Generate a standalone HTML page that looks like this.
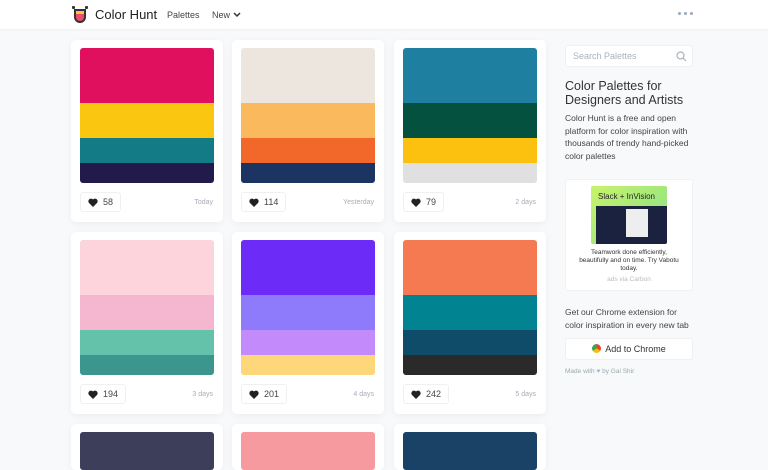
<!DOCTYPE html>
<html style="height:470px;overflow:hidden"><head><style>
*{margin:0;padding:0;box-sizing:border-box}
body{width:768px;height:470px;overflow:hidden;background:#f8f9fb;font-family:"Liberation Sans",sans-serif;color:#333;position:relative}
.hdr{position:absolute;left:0;top:0;width:768px;height:29px;background:#fff;box-shadow:0 1px 3px rgba(0,0,0,.04)}
.card{position:absolute;width:152px;height:182px;background:#fff;border-radius:5px;box-shadow:0 2px 8px rgba(0,0,0,.05)}
.pal{position:absolute;left:9px;top:8px;width:134px;height:135px;border-radius:3px;overflow:hidden}
.pal div{width:100%}
.like{position:absolute;left:9px;top:152px;height:20px;padding:0 7px;border:1px solid #eef0f3;border-radius:3px;font-size:9px;line-height:19px;color:#444}
.like svg{vertical-align:-2px;margin-right:5px}
.date{position:absolute;right:10px;top:159px;font-size:7px;color:#aab}
.side{position:absolute;left:565px}
</style></head><body>
<div class="hdr">
<svg style="position:absolute;left:72px;top:6px" width="16" height="17" viewBox="0 0 16 17"><rect x="0" y="0" width="3" height="3" rx="1" fill="#333"/><rect x="13" y="0" width="3" height="3" rx="1" fill="#333"/><path d="M2 3h12v8a6 6 0 0 1-12 0z" fill="#333"/><path d="M4 5h8v3H4z" fill="#f9c440"/><path d="M4 8h8v3a4 4 0 0 1-8 0z" fill="#ef4b6c"/></svg>
<div style="position:absolute;left:95px;top:7px;font-size:13px;color:#222">Color Hunt</div>
<div style="position:absolute;left:167px;top:10px;font-size:9px;color:#444">Palettes</div>
<div style="position:absolute;left:212px;top:10px;font-size:9px;color:#444">New <svg width="8" height="6" viewBox="0 0 8 6" style="vertical-align:0"><path d="M1 1l3 3 3-3" stroke="#333" stroke-width="1.5" fill="none"/></svg></div>
<div style="position:absolute;left:678px;top:12px;font-size:0">
<span style="display:inline-block;width:3px;height:3px;border-radius:50%;background:#9ab;margin-right:3px"></span><span style="display:inline-block;width:3px;height:3px;border-radius:50%;background:#9ab;margin-right:3px"></span><span style="display:inline-block;width:3px;height:3px;border-radius:50%;background:#9ab"></span></div>
</div>

<div class="card" style="left:71px;top:40px"><div class="pal"><div style="height:55px;background:#e1105f"></div><div style="height:35px;background:#fbc60f"></div><div style="height:25px;background:#137b85"></div><div style="height:20px;background:#231a4c"></div></div><div class="like"><svg width="10" height="9" viewBox="0 0 10 9"><path d="M5 9L1 5A2.4 2.4 0 0 1 5 1.5 2.4 2.4 0 0 1 9 5z" fill="#222"/></svg>58</div><div class="date">Today</div></div>
<div class="card" style="left:232px;top:40px"><div class="pal"><div style="height:55px;background:#ece6de"></div><div style="height:35px;background:#fbb95e"></div><div style="height:25px;background:#f2672a"></div><div style="height:20px;background:#1c3462"></div></div><div class="like"><svg width="10" height="9" viewBox="0 0 10 9"><path d="M5 9L1 5A2.4 2.4 0 0 1 5 1.5 2.4 2.4 0 0 1 9 5z" fill="#222"/></svg>114</div><div class="date">Yesterday</div></div>
<div class="card" style="left:394px;top:40px"><div class="pal"><div style="height:55px;background:#1f7fa0"></div><div style="height:35px;background:#03513e"></div><div style="height:25px;background:#fcc10e"></div><div style="height:20px;background:#e0e0e0"></div></div><div class="like"><svg width="10" height="9" viewBox="0 0 10 9"><path d="M5 9L1 5A2.4 2.4 0 0 1 5 1.5 2.4 2.4 0 0 1 9 5z" fill="#222"/></svg>79</div><div class="date">2 days</div></div>

<div class="card" style="left:71px;top:232px"><div class="pal"><div style="height:55px;background:#fdd3dc"></div><div style="height:35px;background:#f5b6cf"></div><div style="height:25px;background:#63c2a9"></div><div style="height:20px;background:#3d968e"></div></div><div class="like"><svg width="10" height="9" viewBox="0 0 10 9"><path d="M5 9L1 5A2.4 2.4 0 0 1 5 1.5 2.4 2.4 0 0 1 9 5z" fill="#222"/></svg>194</div><div class="date">3 days</div></div>
<div class="card" style="left:232px;top:232px"><div class="pal"><div style="height:55px;background:#6c2bf7"></div><div style="height:35px;background:#8e7bfc"></div><div style="height:25px;background:#c38afc"></div><div style="height:20px;background:#fed77a"></div></div><div class="like"><svg width="10" height="9" viewBox="0 0 10 9"><path d="M5 9L1 5A2.4 2.4 0 0 1 5 1.5 2.4 2.4 0 0 1 9 5z" fill="#222"/></svg>201</div><div class="date">4 days</div></div>
<div class="card" style="left:394px;top:232px"><div class="pal"><div style="height:55px;background:#f67a51"></div><div style="height:35px;background:#028391"></div><div style="height:25px;background:#0f4c6a"></div><div style="height:20px;background:#2b2a2a"></div></div><div class="like"><svg width="10" height="9" viewBox="0 0 10 9"><path d="M5 9L1 5A2.4 2.4 0 0 1 5 1.5 2.4 2.4 0 0 1 9 5z" fill="#222"/></svg>242</div><div class="date">5 days</div></div>

<div class="card" style="left:71px;top:424px;height:46px"><div class="pal" style="height:38px"><div style="height:38px;background:#3c3e5a"></div></div></div>
<div class="card" style="left:232px;top:424px;height:46px"><div class="pal" style="height:38px"><div style="height:38px;background:#f79aa0"></div></div></div>
<div class="card" style="left:394px;top:424px;height:46px"><div class="pal" style="height:38px"><div style="height:38px;background:#1a4267"></div></div></div>

<div class="side" style="top:45px;width:128px;height:22px;background:#fff;border:1px solid #eef0f3;border-radius:3px;font-size:9px;color:#a9b3bd;padding:5px 7px">Search Palettes
<svg style="position:absolute;right:5px;top:5px" width="11" height="11" viewBox="0 0 11 11"><circle cx="4.5" cy="4.5" r="3.5" stroke="#aab4be" stroke-width="1.2" fill="none"/><path d="M7 7l3 3" stroke="#aab4be" stroke-width="1.2"/></svg></div>
<div class="side" style="top:79px;font-size:12.5px;line-height:14px;color:#333">Color Palettes for<br>Designers and Artists</div>
<div class="side" style="top:112px;font-size:8.5px;line-height:12.6px;color:#444;width:135px">Color Hunt is a free and open platform for color inspiration with thousands of trendy hand-picked color palettes</div>
<div class="side" style="top:179px;width:128px;height:112px;background:#fff;border:1px solid #f0f1f3;border-radius:3px">
<div style="position:absolute;left:25px;top:6px;width:76px;height:58px;border-radius:2px;background:linear-gradient(135deg,#c8f36a,#87e08a);overflow:hidden"><div style="font-size:8px;color:#222;padding:6px 0 0 7px">Slack + InVision</div><div style="position:absolute;left:5px;top:20px;width:71px;height:38px;background:#1a2240"><div style="position:absolute;left:30px;top:3px;width:22px;height:28px;background:#eee"></div></div></div>
<div style="position:absolute;top:69px;width:100%;text-align:center;font-size:6.5px;line-height:8px;color:#333">Teamwork done efficiently,<br>beautifully and on time. Try Vabotu<br>today.</div>
<div style="position:absolute;top:96px;width:100%;text-align:center;font-size:6.5px;color:#bbb">ads via Carbon</div></div>
<div class="side" style="top:306px;font-size:8.5px;line-height:13px;color:#444">Get our Chrome extension for<br>color inspiration in every new tab</div>
<div class="side" style="top:338px;width:128px;height:22px;background:#fff;border:1px solid #eef0f3;border-radius:3px;font-size:9px;color:#333;text-align:center;line-height:20px"><span style="display:inline-block;width:9px;height:9px;border-radius:50%;background:conic-gradient(#ea4335 0 33%,#fbbc05 0 66%,#34a853 0);vertical-align:-1px;margin-right:4px"></span>Add to Chrome</div>
<div class="side" style="top:368px;font-size:6.5px;color:#9aa">Made with <span style="color:#9bc">♥</span> by Gal Shir</div>
</body></html>
